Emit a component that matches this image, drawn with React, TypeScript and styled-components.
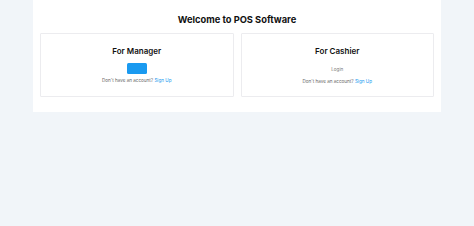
import styled, { createGlobalStyle } from "styled-components";

const GlobalStyle = createGlobalStyle`
  html, body {
    margin: 0;
    padding: 0;
    background: #f1f5f9;
    font-family: Inter, "Noto Sans", sans-serif;
  }
`;

const Page = styled.div`
  min-height: 226px;
  background: #f1f5f9;
`;

const Panel = styled.div`
  width: 408px;
  margin: 0 auto;
  background: #ffffff;
  padding: 13px 7px 15px;
  box-sizing: border-box;
`;

const Title = styled.h1`
  margin: 0 0 6px;
  text-align: center;
  font-size: 9.3px;
  font-weight: 700;
  color: #111;
  line-height: 14px;
`;

const Cards = styled.div`
  display: grid;
  grid-template-columns: 1fr 1fr;
  gap: 7px;
`;

const Card = styled.div`
  height: 64px;
  box-sizing: border-box;
  border: 1px solid #ececef;
  border-radius: 1px;
  display: flex;
  flex-direction: column;
  align-items: center;
  padding-top: 11px;
`;

const CardTitle = styled.h2`
  margin: 0;
  font-size: 8px;
  font-weight: 600;
  color: #111;
  line-height: 12px;
`;

const LoginButton = styled.button`
  margin-top: 6px;
  width: 20px;
  height: 11px;
  border: none;
  border-radius: 1.5px;
  background: #1a9af0;
  color: #1a9af0;
  font-size: 4.5px;
  padding: 0;
  font-family: inherit;
`;

const LoginText = styled.div`
  margin-top: 10px;
  font-size: 4.6px;
  color: #777;
  line-height: 6px;
`;

const SignUpLine = styled.p<{ $gap: number }>`
  margin: ${(p) => p.$gap}px 0 0;
  font-size: 4.6px;
  line-height: 6px;
  color: #666;
`;

const SignUpLink = styled.a`
  color: #1a9af0;
  text-decoration: none;
`;

export default function App() {
  return (
    <>
      <GlobalStyle />
      <Page>
        <Panel>
          <Title>Welcome to POS Software</Title>
          <Cards>
            <Card>
              <CardTitle>For Manager</CardTitle>
              <LoginButton>Login</LoginButton>
              <SignUpLine $gap={4}>
                Don't have an account? <SignUpLink href="#">Sign Up</SignUpLink>
              </SignUpLine>
            </Card>
            <Card>
              <CardTitle>For Cashier</CardTitle>
              <LoginText>Login</LoginText>
              <SignUpLine $gap={6}>
                Don't have an account? <SignUpLink href="#">Sign Up</SignUpLink>
              </SignUpLine>
            </Card>
          </Cards>
        </Panel>
      </Page>
    </>
  );
}
